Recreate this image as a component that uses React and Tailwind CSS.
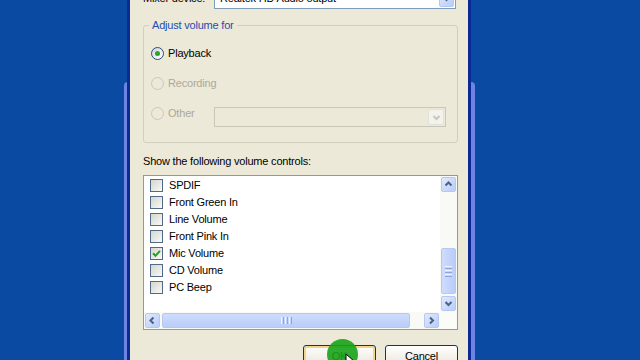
import React from 'react'

const font = { fontFamily: '"Liberation Sans", Arial, sans-serif' }

function Check({ checked }) {
  return (
    <span className="w-[13px] h-[13px] shrink-0 border border-[#51698a] bg-linear-to-br from-[#d6d6cf] to-[#f9f9f6] flex items-center justify-center">
      {checked && (
        <svg width="9" height="9" viewBox="0 0 9 9">
          <path d="M1 4.2 L3.5 6.8 L8 1.8" stroke="#21a121" strokeWidth="2" fill="none" />
        </svg>
      )}
    </span>
  )
}

function Radio({ checked, disabled }) {
  return (
    <span
      className={`w-[13px] h-[13px] shrink-0 rounded-full border flex items-center justify-center ${
        disabled ? 'border-[#cac8bb] bg-[#ece9d8]' : 'border-[#2b4c78] bg-linear-to-br from-[#d6d6cf] to-white'
      }`}
    >
      {checked && <span className="w-[5px] h-[5px] rounded-full bg-[#2aa52a]" />}
    </span>
  )
}

function Chevron({ dir, color = '#4d6185' }) {
  const d = {
    up: 'M1.5 5.5 L4.5 2.5 L7.5 5.5',
    down: 'M1.5 3 L4.5 6 L7.5 3',
    left: 'M5.5 1.5 L2.5 4.5 L5.5 7.5',
    right: 'M3 1.5 L6 4.5 L3 7.5',
  }[dir]
  return (
    <svg width="9" height="9" viewBox="0 0 9 9">
      <path d={d} stroke={color} strokeWidth="2" fill="none" />
    </svg>
  )
}

function ScrollBtn({ dir }) {
  return (
    <div className="w-[17px] h-[17px] shrink-0 p-[1px]">
      <div className="w-full h-full rounded-[2px] border border-[#b4c8f6] bg-linear-to-br from-[#e1eafe] to-[#b8ccf8] flex items-center justify-center">
        <Chevron dir={dir} />
      </div>
    </div>
  )
}

const items = [
  ['SPDIF', false],
  ['Front Green In', false],
  ['Line Volume', false],
  ['Front Pink In', false],
  ['Mic Volume', true],
  ['CD Volume', false],
  ['PC Beep', false],
]

export default function App() {
  return (
    <div className="relative w-[640px] h-[360px] overflow-hidden bg-[#0b4aa3] text-[11px] tracking-[-0.2px] text-black" style={font}>
      {/* parent window behind the dialog */}
      <div className="absolute left-[124px] top-[82px] w-[351px] h-[300px] bg-[#6d84e2] rounded-t-[4px]" />

      {/* dialog */}
      <div className="absolute left-[127px] top-[-20px] w-[344px] h-[400px] border-[3px] border-[#0b2a94] bg-[#ece9d8] pl-[13px] pr-[10px] pt-[5px] flex flex-col">
        {/* mixer device */}
        <div className="flex items-center h-[21px]">
          <span className="w-[71px]">Mixer device:</span>
          <div className="w-[242px] h-[21px] border border-[#7f9db9] bg-white flex items-center">
            <span className="flex-1 pl-[5px]">Realtek HD Audio output</span>
            <div className="w-[17px] h-[19px] p-[1px]">
              <div className="w-full h-full rounded-[2px] border border-[#b4c8f6] bg-linear-to-br from-[#e1eafe] to-[#b8ccf8] flex items-center justify-center">
                <Chevron dir="down" />
              </div>
            </div>
          </div>
        </div>

        {/* group box */}
        <div className="relative mt-[16px] w-[315px] h-[118px] border border-[#d0d0bf] rounded-[3px] pl-[7px] pt-[21px] flex flex-col">
          <span className="absolute left-[5px] top-[-7px] px-[3px] bg-[#ece9d8] text-[#1d4eb0] leading-[13px]">Adjust volume for</span>
          <div className="flex items-center h-[13px] gap-[4px]">
            <Radio checked />
            <span>Playback</span>
          </div>
          <div className="flex items-center h-[13px] gap-[4px] mt-[17px] text-[#aca899]">
            <Radio disabled />
            <span>Recording</span>
          </div>
          <div className="flex items-start mt-[17px]">
            <div className="w-[63px] flex items-center h-[13px] gap-[4px] text-[#aca899]">
              <Radio disabled />
              <span>Other</span>
            </div>
            <div className="w-[232px] h-[20px] border border-[#c9c7ba] bg-[#ece9d8] flex justify-end p-[1px]">
              <div className="w-[16px] h-full rounded-[2px] border border-[#e4e2d6] bg-[#f3f2ec] flex items-center justify-center">
                <Chevron dir="down" color="#c9c7ba" />
              </div>
            </div>
          </div>
        </div>

        <div className="mt-[12px] h-[13px] leading-[13px]">Show the following volume controls:</div>

        {/* list box */}
        <div className="mt-[7px] w-[315px] h-[155px] border border-[#7f9db9] bg-white flex flex-col">
          <div className="flex h-[136px]">
            <div className="flex-1 pt-[1px] pl-[6px]">
              {items.map(([label, checked]) => (
                <div key={label} className="h-[17px] flex items-center gap-[6px]">
                  <Check checked={checked} />
                  <span>{label}</span>
                </div>
              ))}
            </div>
            <div className="w-[17px] flex flex-col bg-[#f9f9f6]">
              <ScrollBtn dir="up" />
              <div className="flex-1 px-[1px]">
                <div className="mt-[55px] h-[46px] rounded-[2px] border border-[#b4c8f6] bg-linear-to-r from-[#cfdcfd] to-[#b9cdf9] flex flex-col items-center justify-center gap-[1px]">
                  <span className="w-[7px] h-[1px] bg-[#eef3ff]" />
                  <span className="w-[7px] h-[1px] bg-[#8ea5e3]" />
                  <span className="w-[7px] h-[1px] bg-[#eef3ff]" />
                  <span className="w-[7px] h-[1px] bg-[#8ea5e3]" />
                  <span className="w-[7px] h-[1px] bg-[#eef3ff]" />
                  <span className="w-[7px] h-[1px] bg-[#8ea5e3]" />
                </div>
              </div>
              <ScrollBtn dir="down" />
            </div>
          </div>
          <div className="flex h-[17px]">
            <div className="flex-1 flex bg-[#f9f9f6]">
              <ScrollBtn dir="left" />
              <div className="flex-1 py-[1px]">
                <div className="ml-[1px] w-[248px] h-full rounded-[2px] border border-[#b4c8f6] bg-linear-to-b from-[#cfdcfd] to-[#b9cdf9] flex items-center justify-center gap-[1px]">
                  <span className="w-[1px] h-[7px] bg-[#eef3ff]" />
                  <span className="w-[1px] h-[7px] bg-[#8ea5e3]" />
                  <span className="w-[1px] h-[7px] bg-[#eef3ff]" />
                  <span className="w-[1px] h-[7px] bg-[#8ea5e3]" />
                  <span className="w-[1px] h-[7px] bg-[#eef3ff]" />
                  <span className="w-[1px] h-[7px] bg-[#8ea5e3]" />
                </div>
              </div>
              <ScrollBtn dir="right" />
            </div>
            <div className="w-[17px] bg-[#fbfbf8]" />
          </div>
        </div>

        {/* buttons */}
        <div className="mt-[15px] flex justify-end gap-[9px] w-[315px]">
          <button className="relative w-[73px] h-[23px] rounded-[3px] border border-[#003c74] bg-linear-to-b from-white to-[#e6e3d6] shadow-[inset_0_0_0_2px_#f4d48a]">
            OK
            <span className="absolute left-[23px] top-[-7px] w-[31px] h-[31px] rounded-full bg-[#17a317]/90" />
            <svg className="absolute left-[41px] top-[7px]" width="10" height="16" viewBox="0 0 10 16">
              <path d="M1 1 L1 13 L4 10 L6 15 L8 14 L6 9 L10 9 Z" fill="white" stroke="black" strokeWidth="1" />
            </svg>
          </button>
          <button className="w-[73px] h-[23px] rounded-[3px] border border-[#003c74] bg-linear-to-b from-white to-[#e6e3d6]">
            Cancel
          </button>
        </div>
      </div>
    </div>
  )
}
